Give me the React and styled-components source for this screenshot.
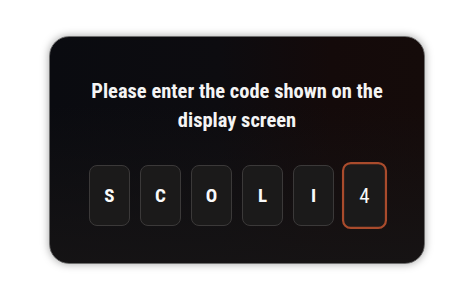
import React from "react";
import styled, { createGlobalStyle } from "styled-components";

const GlobalStyle = createGlobalStyle`
  html, body {
    margin: 0;
    padding: 0;
    background: #fff;
  }
`;

const Page = styled.div`
  width: 474px;
  height: 300px;
  display: flex;
  align-items: center;
  justify-content: center;
`;

const Card = styled.div`
  box-sizing: border-box;
  width: 376px;
  height: 228px;
  border-radius: 20px;
  border: 1px solid #6e6e6e;
  background:
    linear-gradient(180deg, rgba(20, 18, 19, 0) 30%, rgba(22, 20, 21, 0.9) 100%),
    linear-gradient(90deg, #0a0b10 0%, #0d0c10 45%, #140a0a 75%, #150b0a 100%);
  box-shadow: 0 0 9px rgba(0, 0, 0, 0.35);
  display: flex;
  flex-direction: column;
  align-items: center;
  padding-top: 40px;
`;

const Title = styled.h1`
  margin: 0;
  width: 320px;
  text-align: center;
  color: #f4f4f4;
  font-family: "Roboto", sans-serif;
  font-stretch: 80%;
  font-weight: 700;
  font-size: 20.5px;
  line-height: 29px;
`;

const CodeRow = styled.div`
  display: flex;
  align-items: center;
  gap: 10px;
  margin-top: 30px;
`;

const CodeBox = styled.div`
  box-sizing: border-box;
  width: 41px;
  height: 61px;
  border-radius: 8px;
  background: #1b1a1a;
  display: flex;
  align-items: center;
  justify-content: center;
  color: #fafafa;
  font-family: "Roboto", sans-serif;
  font-stretch: 80%;
  font-weight: ${(p) => (p.active ? 400 : 700)};
  font-size: ${(p) => (p.active ? "19px" : "19px")};
  transform: ${(p) => (p.active ? "scale(1.1)" : "none")};
  border: ${(p) => (p.active ? "2px solid #a94b2c" : "1px solid #3b3939")};
`;

const code = ["S", "C", "O", "L", "I", "4"];

export default function App() {
  return (
    <Page>
      <GlobalStyle />
      <Card>
        <Title>Please enter the code shown on the display screen</Title>
        <CodeRow>
          {code.map((c, i) => (
            <CodeBox key={i} active={i === code.length - 1}>
              {c}
            </CodeBox>
          ))}
        </CodeRow>
      </Card>
    </Page>
  );
}
